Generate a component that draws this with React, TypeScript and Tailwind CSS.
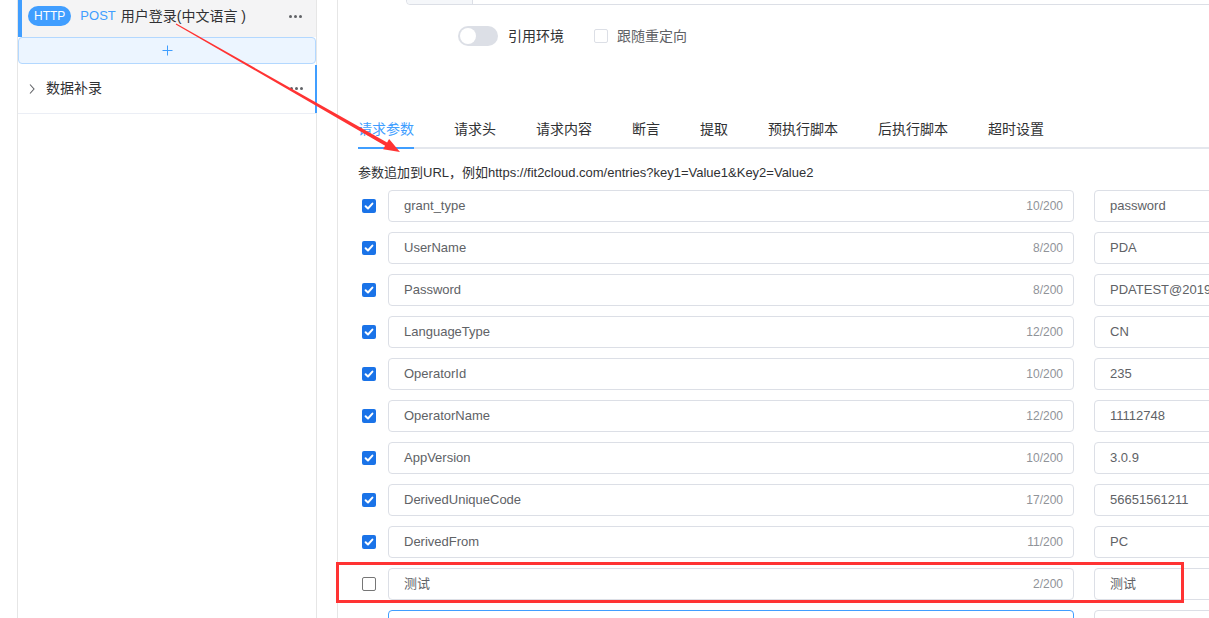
import React from "react";

const rows: { k: string; v: string; n: string; checked: boolean }[] = [
  { k: "grant_type", v: "password", n: "10/200", checked: true },
  { k: "UserName", v: "PDA", n: "8/200", checked: true },
  { k: "Password", v: "PDATEST@2019", n: "8/200", checked: true },
  { k: "LanguageType", v: "CN", n: "12/200", checked: true },
  { k: "OperatorId", v: "235", n: "10/200", checked: true },
  { k: "OperatorName", v: "11112748", n: "12/200", checked: true },
  { k: "AppVersion", v: "3.0.9", n: "10/200", checked: true },
  { k: "DerivedUniqueCode", v: "56651561211", n: "17/200", checked: true },
  { k: "DerivedFrom", v: "PC", n: "11/200", checked: true },
  { k: "测试", v: "测试", n: "2/200", checked: false },
];

const tabs = ["请求参数", "请求头", "请求内容", "断言", "提取", "预执行脚本", "后执行脚本", "超时设置"];

function Dots() {
  return (
    <div className="flex items-center gap-[2px]">
      <span className="block w-[3px] h-[3px] rounded-full bg-[#606266]" />
      <span className="block w-[3px] h-[3px] rounded-full bg-[#606266]" />
      <span className="block w-[3px] h-[3px] rounded-full bg-[#606266]" />
    </div>
  );
}

function CheckBox({ checked }: { checked: boolean }) {
  if (checked) {
    return (
      <span className="flex w-[14px] h-[14px] rounded-[2px] bg-[#1a73e8] items-center justify-center">
        <svg width="10" height="10" viewBox="0 0 10 10">
          <path d="M1.6 5.2 L4 7.5 L8.4 2.6" stroke="#fff" strokeWidth="2" fill="none" strokeLinecap="round" strokeLinejoin="round" />
        </svg>
      </span>
    );
  }
  return <span className="block w-[14px] h-[14px] rounded-[2px] border border-[#767676] bg-white" />;
}

export default function App() {
  return (
    <div
      className="relative w-[1209px] h-[618px] overflow-hidden bg-white flex"
      style={{ fontFamily: '"Liberation Sans", Arial, "Noto Sans CJK SC", sans-serif' }}
    >
      {/* Sidebar */}
      <div className="w-[317px] shrink-0 pl-[17px] h-full">
        <div className="h-full border-l border-r border-[#e6e6e6]">
          <div className="h-[37px] bg-[#f4f4f5] border-l-4 border-[#409eff] flex items-start pt-[6px] pl-[6px] pr-[14px]">
            <div className="flex items-center h-[20px] w-full">
              <span className="h-[20px] px-[6px] rounded-full bg-[#409eff] text-white text-[12px] leading-[20px]">HTTP</span>
              <span className="ml-[9px] text-[13px] text-[#409eff]">POST</span>
              <span className="ml-[5px] text-[14px] text-[#303133]">用户登录(中文语言 )</span>
              <div className="ml-auto">
                <Dots />
              </div>
            </div>
          </div>
          <div className="h-[27px] bg-[#ecf5ff] border border-[#b3d8ff] rounded-[4px] flex items-center justify-center">
            <svg width="11" height="11" viewBox="0 0 11 11">
              <path d="M5.5 0.5 V10.5 M0.5 5.5 H10.5" stroke="#409eff" strokeWidth="1" />
            </svg>
          </div>
          <div className="h-[50px] border-b border-[#ebeef5] flex items-center pl-[10px] pr-[13px] relative">
            <svg width="8" height="12" viewBox="0 0 8 12" className="mr-[10px]">
              <path d="M2 1.5 L6 6 L2 10.5" stroke="#606266" strokeWidth="1.1" fill="none" />
            </svg>
            <span className="text-[14px] text-[#303133]">数据补录</span>
            <div className="ml-auto">
              <Dots />
            </div>
            <span className="absolute right-[-1px] top-[1px] bottom-0 w-[2px] bg-[#409eff]" />
          </div>
        </div>
      </div>
      <div className="w-[21px] shrink-0 h-full border-r border-[#e6e6e6]" />

      {/* Main */}
      <div className="flex-1 min-w-0 pl-[20px] flex flex-col">
        <div className="ml-[48px] -mt-[27px] h-[32px] shrink-0 border border-[#dcdfe6] rounded-[4px] flex w-[900px]">
          <div className="w-[66px] bg-[#f5f7fa] border-r border-[#dcdfe6] rounded-l-[4px]" />
        </div>
        <div className="mt-[21px] ml-[100px] h-[20px] flex items-center">
          <span className="relative block w-[40px] h-[20px] rounded-full bg-[#dcdfe6]">
            <span className="absolute left-[2px] top-[2px] w-[16px] h-[16px] rounded-full bg-white" />
          </span>
          <span className="ml-[10px] text-[14px] text-[#303133]">引用环境</span>
          <span className="ml-[30px] block w-[14px] h-[14px] border border-[#dcdfe6] rounded-[2px] bg-white" />
          <span className="ml-[9px] text-[14px] text-[#606266]">跟随重定向</span>
        </div>
        <div className="mt-[63px] h-[40px] relative flex shrink-0">
          <div className="absolute left-0 right-0 bottom-0 h-[2px] bg-[#e4e7ed]" />
          {tabs.map((t, i) => (
            <div
              key={t}
              className={`relative h-[40px] leading-[40px] text-[14px] ${i === 0 ? "pl-0 pr-[20px] text-[#409eff]" : "px-[20px] text-[#303133]"}`}
            >
              {t}
              {i === 0 && <span className="absolute left-0 right-[20px] bottom-0 h-[2px] bg-[#409eff]" />}
            </div>
          ))}
        </div>
        <div className="mt-[15px] text-[13px] leading-[18px] text-[#303133] whitespace-nowrap">
          参数追加到URL，例如https://fit2cloud.com/entries?key1=Value1&amp;Key2=Value2
        </div>
        <div className="mt-[8px] flex flex-col gap-[10px]">
          {rows.map((r) => (
            <div key={r.k} className="flex items-center h-[32px]">
              <div className="w-[30px] shrink-0 pl-[4px] flex items-center">
                <CheckBox checked={r.checked} />
              </div>
              <div className="w-[686px] shrink-0 h-[32px] border border-[#dcdfe6] rounded-[4px] flex items-center pl-[15px] pr-[10px]">
                <span className="text-[13px] text-[#606266]">{r.k}</span>
                <span className="ml-auto text-[12px] text-[#909399]">{r.n}</span>
              </div>
              <div className="ml-[20px] w-[300px] shrink-0 h-[32px] border border-[#dcdfe6] rounded-[4px] flex items-center pl-[15px]">
                <span className="text-[13px] text-[#606266] whitespace-nowrap">{r.v}</span>
              </div>
            </div>
          ))}
          <div className="flex items-center h-[32px]">
            <div className="w-[30px] shrink-0" />
            <div className="w-[686px] shrink-0 h-[32px] border border-[#409eff] rounded-[4px]" />
            <div className="ml-[20px] w-[300px] shrink-0 h-[32px] border border-[#dcdfe6] rounded-[4px]" />
          </div>
        </div>
      </div>

      {/* Red highlight box */}
      <div className="absolute left-[336px] top-[562px] w-[848px] h-[41px] border-[3px] border-[#ff3333] pointer-events-none" />

      {/* Red arrow */}
      <svg className="absolute left-0 top-0 pointer-events-none" width="1209" height="618" viewBox="0 0 1209 618">
        <polygon
          points="175.75,24.43 176.25,23.57 387.1,142.4 389.1,138.9 400,152 383.1,149.3 385.1,145.8"
          fill="#ff3333"
        />
      </svg>
    </div>
  );
}
